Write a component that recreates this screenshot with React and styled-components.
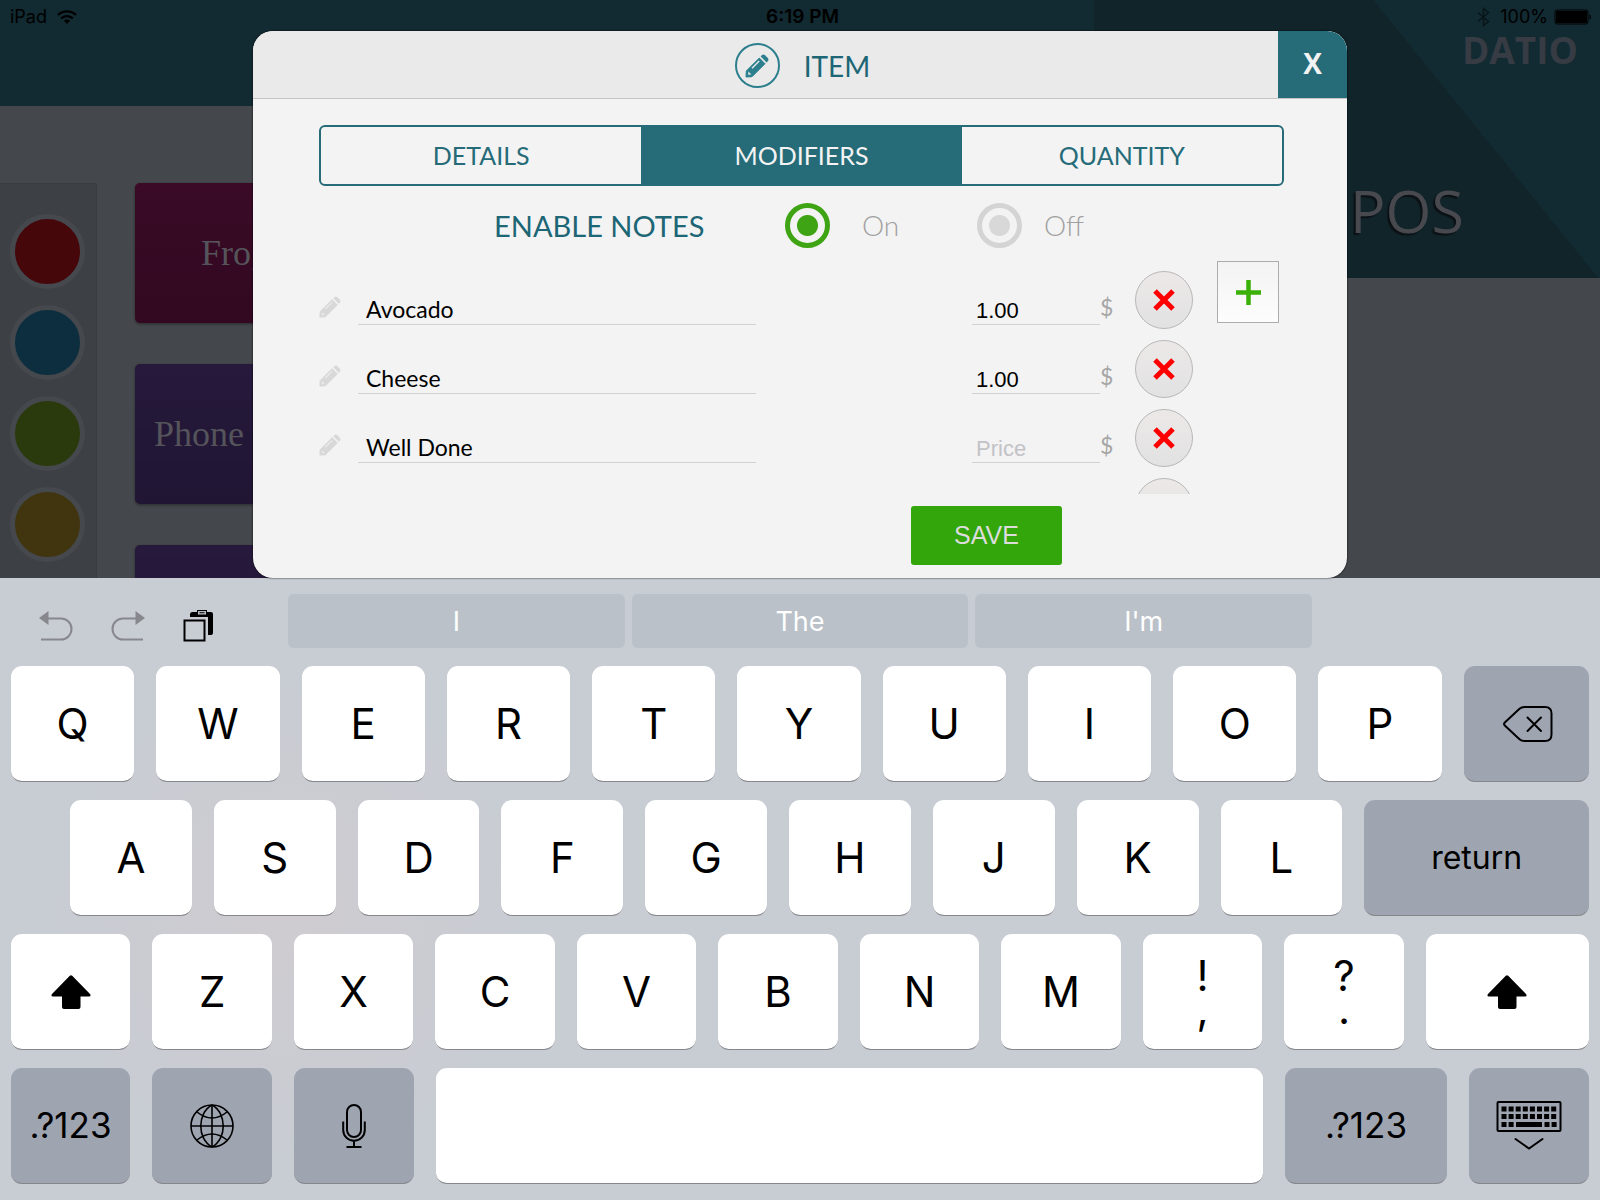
import React, { useState } from "react";
import styled, { createGlobalStyle } from "styled-components";

const TILES = [
  { id: 1, name: "Frog", color: "#3a0a26", indent: 66 },
  { id: 2, name: "Phone", color: "#26193c", indent: 19 },
  { id: 3, name: "", color: "#26193c", indent: 19 },
];

const SWATCHES = [
  { name: "Red", color: "#46070b" },
  { name: "Blue", color: "#0d2e3e" },
  { name: "Green", color: "#2b3a0d" },
  { name: "Yellow", color: "#40350f" },
];

const MODIFIERS = [
  { id: 1, name: "Avocado", price: "1.00" },
  { id: 2, name: "Cheese", price: "1.00" },
  { id: 3, name: "Well Done", price: "" },
  { id: 4, name: "", price: "" },
];

const TABS = ["DETAILS", "MODIFIERS", "QUANTITY"];

const Pencil = ({ size, color, hole }) => (
  <svg width={size} height={size} viewBox="0 0 24 24" aria-hidden="true">
    <path
      d="M1 23 1.3 17 14.3 4 20 9.7 7 22.7z"
      fill={color}
      stroke={color}
      strokeLinejoin="round"
    />
    <path
      d="M15.6 2.4 17 1q1.500-1 3 .2L22.800 4q1.200 1.500 .2 3L21.600 8.400z"
      fill={color}
    />
    <path d="M7 14.200 14.200 7" stroke={hole} strokeWidth="1.400" />
    <path d="M3.400 17.600 6.400 20.600 3.200 20.800z" fill={hole} />
  </svg>
);

const Wifi = () => (
  <svg width="20" height="14" viewBox="0 0 20 14" aria-hidden="true">
    <g fill="none" stroke="#000" strokeWidth="2.400">
      <path d="M1 5a13 13 0 0 1 18 0" />
      <path d="M4.200 8.400a8.500 8.500 0 0 1 11.600 0" />
    </g>
    <path d="M6.800 10.600q3.200-2.400 6.400 0L10 14z" />
  </svg>
);

const Bluetooth = () => (
  <svg width="13" height="20" viewBox="0 0 13 20" aria-hidden="true">
    <path
      d="M1 5.500 11.500 14.500 6.500 18.500V1.500L11.500 5.500 1 14.500"
      fill="none"
      stroke="#08161a"
      strokeWidth="1.500"
    />
  </svg>
);

const Battery = () => (
  <svg width="38" height="16" viewBox="0 0 38 16" aria-hidden="true">
    <rect x="1" y="1" width="33" height="14" rx="2" fill="none" stroke="#000" />
    <rect x="2" y="2" width="31" height="12" rx="1" />
    <path d="M35.500 5q3 3 0 6z" />
  </svg>
);

const Cross = () => (
  <svg width="22" height="22" viewBox="0 0 22 22" aria-hidden="true">
    <path d="M2 2 20 20M20 2 2 20" stroke="#fe0000" strokeWidth="5" />
  </svg>
);

const Plus = () => (
  <svg width="25" height="25" viewBox="0 0 25 25" aria-hidden="true">
    <path d="M12.500 0V25M0 12.500H25" stroke="#3bb008" strokeWidth="4.500" />
  </svg>
);

const Undo = ({ flip }) => (
  <svg width="34" height="30" viewBox="0 0 34 30" aria-hidden="true">
    <g transform={flip ? "matrix(-1 0 0 1 34 0)" : undefined}>
      <path d="M0 7 9.500 0V14z" fill="#86888d" />
      <path
        d="M9 7.500H22a10.500 10.500 0 0 1 0 21H2"
        fill="none"
        stroke="#86888d"
        strokeWidth="2"
      />
    </g>
  </svg>
);

const Paste = () => (
  <svg width="31" height="32" viewBox="0 0 31 32" aria-hidden="true">
    <path d="M7 7V4.500Q7 2 9.500 2H28q2 0 2 2V23q0 2-2 2H25V7z" />
    <rect x="14.500" y=".5" width="9" height="4.500" fill="#b9bcc3" stroke="#000" />
    <path d="M16.500 2.700H21.500" stroke="#000" />
    <rect
      x="1.500"
      y="10.500"
      width="20"
      height="20"
      fill="none"
      stroke="#000"
      strokeWidth="2"
    />
  </svg>
);

const Backspace = () => (
  <svg width="54" height="36" viewBox="-4 0 54 36" aria-hidden="true">
    <g fill="none" stroke="#000" strokeWidth="2" strokeLinecap="round">
      <path d="M1.800 16.500 16.500 2.800Q18.500 1 21.500 1H42q6.500 0 6.500 6.500V28.500q0 6.500-6.500 6.500H21.500q-3 0-5-1.800L1.800 19.500q-1.500-1.500 0-3z" />
      <path d="M24.500 11.500 38 25M38 11.500 24.500 25" />
    </g>
  </svg>
);

const Shift = () => (
  <svg width="40" height="34" viewBox="0 0 40 34" aria-hidden="true">
    <path d="M18.800.8q1.200-1.200 2.400 0L39 19q1.500 2.500-1 2.500H29.500V32q0 2-2 2H13q-2 0-2-2V21.500H2q-2.500 0-1-2.500z" />
  </svg>
);

const Globe = () => (
  <svg width="44" height="44" viewBox="0 0 44 44" aria-hidden="true">
    <g fill="none" stroke="#000" strokeWidth="1.600">
      <circle cx="22" cy="22" r="21" />
      <path d="M22 1V43M1 22H43" />
      <path d="M22 1C7 9 7 35 22 43M22 1C37 9 37 35 22 43" />
      <path d="M7 8Q22 20 37 8M7 36Q22 24 37 36" />
    </g>
  </svg>
);

const Mic = () => (
  <svg width="24" height="44" viewBox="0 0 24 44" aria-hidden="true">
    <g fill="none" stroke="#000" strokeWidth="2">
      <rect x="5" y="1" width="14" height="32" rx="7" />
      <path d="M1.200 17.500V26a10.800 10.800 0 0 0 21.600 0V17.500M12 37V43M4.500 43H19.500" />
    </g>
  </svg>
);

const HideKeyboard = () => (
  <svg width="66" height="49" viewBox="0 0 66 49" aria-hidden="true">
    <g fill="none" stroke="#000" strokeWidth="2">
      <rect x="1.500" y="1" width="63" height="29" rx="1" />
      <path d="M5.500 8H61M5.500 15.500H61" strokeWidth="5" strokeDasharray="5 2.100" />
      <path d="M5.500 23.500H18M48.500 23.500H61" strokeWidth="5" strokeDasharray="5 2.100" />
      <path d="M20 23.500H46" strokeWidth="5" />
      <path d="M19.500 38 33 47.500 46.500 38" strokeLinecap="round" />
    </g>
  </svg>
);

const KEY_ROWS = [
  [
    ..."QWERTYUIOP".split("").map((k) => ({ label: k, grow: 123 })),
    { name: "Backspace", icon: <Backspace />, grow: 125, dark: true },
  ],
  [
    ..."ASDFGHJKL".split("").map((k) => ({ label: k, grow: 122 })),
    { label: "return", grow: 225, dark: true, size: 32 },
  ],
  [
    { name: "Shift", icon: <Shift />, grow: 120 },
    ..."ZXCVBNM".split("").map((k) => ({ label: k, grow: 120 })),
    { label: "!\n,", grow: 120 },
    { label: "?\n.", grow: 120 },
    { name: "Right shift", icon: <Shift />, grow: 164 },
  ],
  [
    { label: ".?123", grow: 119, dark: true, size: 35 },
    { name: "Next keyboard", icon: <Globe />, grow: 120, dark: true },
    { name: "Dictate", icon: <Mic />, grow: 120, dark: true },
    { name: "Space", grow: 827 },
    { label: ".?123", grow: 162, dark: true, size: 35 },
    { name: "Hide keyboard", icon: <HideKeyboard />, grow: 120, dark: true },
  ],
];

const Keyboard = () => (
  <KeyboardPanel>
    <Assistant>
      <Tools>
        <ToolButton aria-label="Undo">
          <Undo />
        </ToolButton>
        <ToolButton aria-label="Redo">
          <Undo flip />
        </ToolButton>
        <ToolButton aria-label="Paste">
          <Paste />
        </ToolButton>
      </Tools>
      <Suggestions>
        {["I", "The", "I'm"].map((word) => (
          <Suggestion key={word}>{word}</Suggestion>
        ))}
      </Suggestions>
    </Assistant>
    {KEY_ROWS.map((row, i) => (
      <KeyRow key={i} $inset={i === 1}>
        {row.map((k, j) => (
          <Key
            key={j}
            aria-label={k.name}
            $grow={k.grow}
            $dark={k.dark}
            $size={k.size}
          >
            {k.icon || k.label}
          </Key>
        ))}
      </KeyRow>
    ))}
  </KeyboardPanel>
);

const ItemModal = () => {
  const [tab, setTab] = useState("MODIFIERS");
  const [notes, setNotes] = useState("on");
  const [rows, setRows] = useState(MODIFIERS);

  const update = (id, field, value) =>
    setRows(rows.map((r) => (r.id === id ? { ...r, [field]: value } : r)));
  const remove = (id) => setRows(rows.filter((r) => r.id !== id));
  const add = () => setRows([...rows, { id: Date.now(), name: "", price: "" }]);

  return (
    <Modal role="dialog" aria-labelledby="modal-title">
      <ModalHeader>
        <ModalTitle>
          <TitleIcon>
            <Pencil size={24} color="#2c7f8d" hole="#eaeaea" />
          </TitleIcon>
          <h1 id="modal-title">ITEM</h1>
        </ModalTitle>
        <CloseButton aria-label="Close">X</CloseButton>
      </ModalHeader>
      <ModalBody>
        <Tabs>
          {TABS.map((t) => (
            <Tab key={t} $active={t === tab} onClick={() => setTab(t)}>
              {t}
            </Tab>
          ))}
        </Tabs>
        <Notes>
          <NotesLabel>ENABLE NOTES</NotesLabel>
          <Option $gap={32}>
            <Radio
              name="notes"
              checked={notes === "on"}
              onChange={() => setNotes("on")}
            />
            On
          </Option>
          <Option $gap={22}>
            <Radio
              name="notes"
              checked={notes === "off"}
              onChange={() => setNotes("off")}
            />
            Off
          </Option>
        </Notes>
        <ListArea>
          <ModifierList>
            {rows.map((r) => (
              <ModifierRow key={r.id}>
                <RowIcon>
                  <Pencil size={22} color="#d8d8d8" hole="#ebebeb" />
                </RowIcon>
                <NameInput
                  aria-label="Modifier name"
                  value={r.name}
                  onChange={(e) => update(r.id, "name", e.target.value)}
                />
                <PriceInput
                  aria-label="Modifier price"
                  placeholder={r.name && "Price"}
                  value={r.price}
                  onChange={(e) => update(r.id, "price", e.target.value)}
                />
                <Currency>{r.name && "$"}</Currency>
                <RemoveButton aria-label="Remove" onClick={() => remove(r.id)}>
                  <Cross />
                </RemoveButton>
              </ModifierRow>
            ))}
          </ModifierList>
          <AddButton aria-label="Add modifier" onClick={add}>
            <Plus />
          </AddButton>
        </ListArea>
        <SaveButton>SAVE</SaveButton>
      </ModalBody>
    </Modal>
  );
};

const App = () => (
  <Screen>
    <GlobalStyle />
    <Stage>
      <Backdrop>
        <Board>
          <TopBar />
          <BoardContent>
            <Palette>
              {SWATCHES.map((s) => (
                <Swatch key={s.name} aria-label={s.name} $color={s.color} />
              ))}
            </Palette>
            <Tiles>
              {TILES.map((t) => (
                <Tile key={t.id} $color={t.color} $indent={t.indent}>
                  {t.name}
                </Tile>
              ))}
            </Tiles>
          </BoardContent>
        </Board>
        <BrandPanel>
          <Brand>DATIO</Brand>
          <Product>POS</Product>
        </BrandPanel>
      </Backdrop>
      <StatusBar>
        <StatusGroup>
          iPad <Wifi />
        </StatusGroup>
        <strong>6:19 PM</strong>
        <StatusGroup $end>
          <Bluetooth />
          <Charge>
            100% <Battery />
          </Charge>
        </StatusGroup>
      </StatusBar>
      <ItemModal />
    </Stage>
    <Keyboard />
  </Screen>
);

export default App;

const GlobalStyle = createGlobalStyle`
  * {
    box-sizing: border-box;
  }

  body {
    margin: 0;
    font-family: Inter, "Liberation Sans", sans-serif;
  }

  button,
  input {
    margin: 0;
    padding: 0;
    border: 0;
    font: inherit;
    color: inherit;
  }

  svg {
    display: block;
    flex: none;
  }
`;

const Screen = styled.div`
  display: flex;
  flex-direction: column;
  min-height: 100vh;
  background: #c8ccd3;
`;

const Stage = styled.div`
  display: grid;
  grid-template-rows: 31px auto;
  grid-template-columns: 100%;
`;

const Backdrop = styled.div`
  grid-row: 1 / 3;
  grid-column: 1;
  display: flex;
  align-items: flex-start;
  contain: size;
  overflow: hidden;
  background: #44474b;
`;

const Board = styled.div`
  flex: 1;
`;

const TopBar = styled.div`
  height: 106px;
  background: #122a31;
`;

const BoardContent = styled.div`
  display: flex;
  gap: 38px;
  padding-top: 77px;
`;

const Palette = styled.div`
  display: flex;
  flex-direction: column;
  align-items: flex-start;
  gap: 16px;
  width: 97px;
  height: 420px;
  padding: 30px 0 0 10px;
  border: 1px solid #383b3f;
  border-left: 0;
  border-radius: 0 3px 0 0;
  background: #3d4044;
`;

const Swatch = styled.button`
  width: 75px;
  height: 75px;
  border: 5px solid #45484d;
  border-radius: 50%;
  background: ${({ $color }) => $color};
`;

const Tiles = styled.div`
  display: flex;
  flex-direction: column;
  gap: 41px;
  width: 240px;
`;

const Tile = styled.button`
  height: 140px;
  padding-left: ${({ $indent }) => $indent}px;
  border-radius: 5px;
  background: linear-gradient(transparent, rgba(0, 0, 0, 0.15))
    ${({ $color }) => $color};
  box-shadow: 0 1px 3px rgba(0, 0, 0, 0.4);
  color: #55545b;
  font-family: "Liberation Serif", serif;
  font-size: 36px;
  text-align: left;
`;

const BrandPanel = styled.div`
  width: 506px;
  height: 278px;
  padding: 32px 22px 0 256px;
  background: linear-gradient(51deg, #10242a 69%, #122a31 69%);
`;

const Brand = styled.div`
  color: #363b44;
  font-family: "Open Sans", sans-serif;
  font-size: 37px;
  font-weight: 700;
  line-height: 36px;
  text-align: right;
`;

const Product = styled.div`
  margin-top: 97px;
  color: #47494e;
  font-family: "Open Sans", sans-serif;
  font-size: 59px;
  font-weight: 400;
  line-height: 90px;
  text-shadow: -2px 2px 1px #0c1115;
`;

const StatusBar = styled.div`
  grid-row: 1;
  grid-column: 1;
  z-index: 1;
  display: grid;
  grid-template-columns: 1fr auto 1fr;
  align-items: center;
  padding: 2px 8px 0 10px;
  font-size: 18px;
  line-height: 20px;

  strong {
    padding-left: 3px;
    font-size: 19px;
    font-weight: 600;
  }
`;

const StatusGroup = styled.div`
  display: flex;
  align-items: center;
  justify-content: ${({ $end }) => ($end ? "flex-end" : "flex-start")};
  gap: 10px;
`;

const Charge = styled.span`
  display: flex;
  align-items: center;
  gap: 6px;
`;

const Modal = styled.section`
  grid-row: 2;
  grid-column: 1;
  z-index: 1;
  justify-self: center;
  width: 90%;
  max-width: 1094px;
  overflow: hidden;
  border-radius: 20px;
  background: #f3f3f3;
  box-shadow: 0 0 2px #000;
  font-family: Lato, sans-serif;
`;

const ModalHeader = styled.header`
  display: grid;
  grid-template-columns: 1fr auto 1fr;
  height: 68px;
  border-bottom: 1px solid #c4c4c4;
  background: #eaeaea;
`;

const ModalTitle = styled.div`
  grid-column: 2;
  display: flex;
  align-items: center;
  gap: 24px;
  padding: 2px 0 0 5px;

  h1 {
    margin: 0;
    color: #1c6675;
    font-size: 28px;
    font-weight: 400;
  }
`;

const TitleIcon = styled.span`
  display: flex;
  align-items: center;
  justify-content: center;
  width: 45px;
  height: 45px;
  border: 2px solid #2c7f8d;
  border-radius: 50%;
`;

const CloseButton = styled.button`
  justify-self: end;
  width: 69px;
  padding-bottom: 4px;
  background: #256b78;
  color: #f3f3f3;
  font-family: "Open Sans", sans-serif;
  font-size: 28px;
  font-weight: 700;
`;

const ModalBody = styled.div`
  display: flex;
  flex-direction: column;
  padding: 26px 63px 13px 66px;
`;

const Tabs = styled.div`
  display: grid;
  grid-template-columns: repeat(3, 1fr);
  height: 61px;
  overflow: hidden;
  border: 2px solid #256b78;
  border-radius: 6px;
`;

const Tab = styled.button`
  padding-bottom: 2px;
  background: ${({ $active }) => ($active ? "#256b78" : "transparent")};
  color: ${({ $active }) => ($active ? "#f3f3f3" : "#256b78")};
  font-size: 25px;
`;

const Notes = styled.div`
  display: grid;
  grid-template-columns: 291px 192px auto;
  align-items: center;
  justify-content: start;
  height: 46px;
  margin-top: 16px;
  padding-left: 175px;
  font-size: 28px;
`;

const NotesLabel = styled.span`
  color: #1c6675;
  font-size: 29px;
`;

const Option = styled.label`
  display: flex;
  align-items: center;
  gap: ${({ $gap }) => $gap}px;
  color: #a0a0a0;
  font-weight: 300;
`;

const Radio = styled.input.attrs({ type: "radio" })`
  appearance: none;
  width: 45px;
  height: 45px;
  border: 5px solid #d4d4d4;
  border-radius: 50%;
  background: radial-gradient(circle, #d8d8d8 10px, transparent 11px);

  &:checked {
    border-color: #3ea413;
    background: radial-gradient(circle, #3ea413 10px, transparent 11px);
  }
`;

const ListArea = styled.div`
  display: flex;
  align-items: flex-start;
  gap: 24px;
  height: 233px;
  margin-top: 13px;
  overflow: hidden;
`;

const ModifierList = styled.div`
  flex: 1;
  display: flex;
  flex-direction: column;
  gap: 11px;
  padding-top: 10px;
`;

const ModifierRow = styled.div`
  display: flex;
  align-items: flex-end;
  height: 58px;
`;

const RowIcon = styled.span`
  width: 39px;
  padding-bottom: 11px;
`;

const Field = styled.input`
  height: 32px;
  margin-bottom: 4px;
  border-bottom: 1px solid #d2d2d2;
  background: transparent;
  color: #000;
  outline: 0;
`;

const NameInput = styled(Field)`
  flex: 0 1 398px;
  padding-left: 8px;
  font-size: 23px;
`;

const PriceInput = styled(Field)`
  width: 128px;
  margin-left: auto;
  padding: 4px 0 0 4px;
  font-family: "Liberation Sans", sans-serif;
  font-size: 22px;

  &::placeholder {
    color: #c2c2c7;
    opacity: 1;
  }
`;

const Currency = styled.span`
  width: 35px;
  padding-bottom: 8px;
  color: #a6a6a6;
  font-size: 23px;
`;

const RemoveButton = styled.button`
  display: flex;
  align-items: center;
  justify-content: center;
  width: 58px;
  height: 58px;
  border: 1px solid #b8b8b8;
  border-radius: 50%;
  background: linear-gradient(#ece8e8, #e2e2e2);
`;

const AddButton = styled.button`
  display: flex;
  align-items: center;
  justify-content: center;
  width: 62px;
  height: 62px;
  margin-right: 5px;
  border: 1px solid #acacac;
  background: linear-gradient(#f3f3f3, #fdfdfd);
`;

const SaveButton = styled.button`
  align-self: flex-end;
  width: 151px;
  height: 59px;
  margin: 12px 222px 0 0;
  border-radius: 3px;
  background: #33a60b;
  color: #dcdcdc;
  font-family: "Liberation Sans", sans-serif;
  font-size: 25px;
`;

const KeyboardPanel = styled.div`
  flex: 1;
  display: flex;
  flex-direction: column;
  gap: 18px;
  padding: 16px 11px;
  background: radial-gradient(
      circle at 18% 55%,
      #cfccd1,
      rgba(200, 204, 211, 0) 240px
    )
    #c8ccd3;
`;

const Assistant = styled.div`
  display: grid;
  grid-template-columns: 277px 1fr 277px;
  height: 54px;
`;

const Tools = styled.div`
  display: flex;
  align-items: center;
  gap: 38px;
  padding: 10px 0 0 28px;
`;

const ToolButton = styled.button`
  background: none;
`;

const Suggestions = styled.div`
  display: grid;
  grid-template-columns: repeat(3, 1fr);
  gap: 7px;
`;

const Suggestion = styled.button`
  border-radius: 6px;
  background: #bac1c9;
  color: #fff;
  font-size: 27px;
`;

const KeyRow = styled.div`
  display: flex;
  gap: 22px;
  height: 116px;
  padding-left: ${({ $inset }) => ($inset ? "59px" : "0")};
`;

const Key = styled.button`
  flex: ${({ $grow }) => $grow} 1 0;
  display: flex;
  align-items: center;
  justify-content: center;
  min-width: 0;
  border-bottom: 1px solid #85878c;
  border-radius: 11px;
  background: ${({ $dark }) => ($dark ? "#9ea4b0" : "#fff")};
  color: #000;
  font-size: ${({ $size = 42 }) => $size}px;
  line-height: 33px;
  white-space: pre-line;
`;
